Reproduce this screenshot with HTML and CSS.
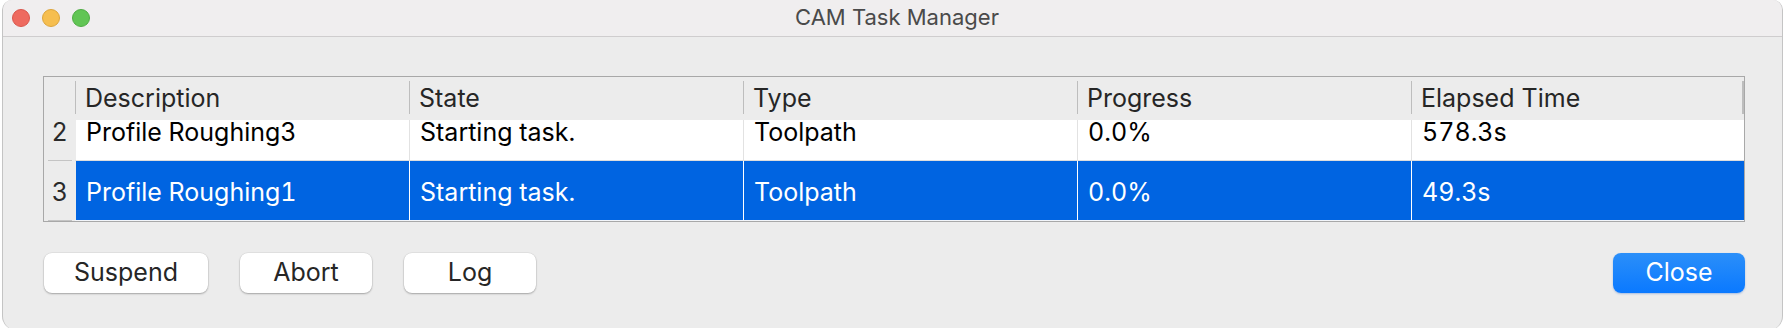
FILE: index.html
```html
<!DOCTYPE html>
<html lang="en">
<head>
    <meta charset="UTF-8">
    <title>CAM Task Manager</title>
    <link rel="stylesheet" href="styles.css">
</head>
<body>
    <div class="window">
        <div class="titlebar">
            <div class="lights">
                <span class="light light-close"></span>
                <span class="light light-min"></span>
                <span class="light light-max"></span>
            </div>
            <div class="title">CAM Task Manager</div>
        </div>

        <div class="content">
            <div class="task-table">
                <div class="table-header">
                    <div class="corner"></div>
                    <div class="head-cell">Description</div>
                    <div class="head-cell">State</div>
                    <div class="head-cell">Type</div>
                    <div class="head-cell">Progress</div>
                    <div class="head-cell head-last">Elapsed Time</div>
                </div>

                <div class="table-body">
                    <div class="task-row scrolled">
                        <div class="row-num">2</div>
                        <div class="cell cell-first">Profile Roughing3</div>
                        <div class="cell">Starting task.</div>
                        <div class="cell">Toolpath</div>
                        <div class="cell">0.0%</div>
                        <div class="cell">578.3s</div>
                    </div>
                    <div class="task-row selected">
                        <div class="row-num">3</div>
                        <div class="cell cell-first">Profile Roughing1</div>
                        <div class="cell">Starting task.</div>
                        <div class="cell">Toolpath</div>
                        <div class="cell">0.0%</div>
                        <div class="cell">49.3s</div>
                    </div>
                </div>
            </div>

            <div class="actions">
                <div class="action-group">
                    <button class="btn btn-suspend">Suspend</button>
                    <button class="btn">Abort</button>
                    <button class="btn">Log</button>
                </div>
                <button class="btn btn-primary">Close</button>
            </div>
        </div>
    </div>
</body>
</html>
```

FILE: styles.css
```css
body {
    margin: 0;
    background: #ffffff;
    font-family: Inter, 'Liberation Sans', sans-serif;
    overflow: hidden;
}

.window {
    margin-left: 2px;
    width: 1779px;
    height: 330px;
    background: #ececec;
    border-left: 1px solid #c4c4c4;
    border-right: 1px solid #c4c4c4;
    border-radius: 10px 10px 14px 14px;
    overflow: hidden;
}

.titlebar {
    height: 36px;
    background: #f0eeef;
    border-bottom: 1px solid #cfcdce;
    display: flex;
    align-items: center;
}

.lights {
    display: flex;
    gap: 12px;
    padding-left: 9px;
    width: 300px;
    flex-shrink: 0;
}

.light {
    flex-shrink: 0;
    width: 18px;
    height: 18px;
    border-radius: 50%;
    box-sizing: border-box;
}

.light-close { background: #ee6a5f; border: 1px solid #d9564c; }
.light-min { background: #f6be4f; border: 1px solid #dca43b; }
.light-max { background: #61c554; border: 1px solid #4fac43; }

.title {
    flex: 1;
    margin-right: 300px;
    text-align: center;
    font-size: 22px;
    color: #4a4a4a;
    padding-bottom: 3px;
}

.content {
    padding: 39px 0 0 40px;
}

.task-table {
    width: 1700px;
    border: 1px solid #a8a8a8;
    background: #f4f4f4;
}

.table-header,
.task-row {
    display: grid;
    grid-template-columns: 31px 334px 334px 334px 334px 333px;
}

.table-header {
    height: 43px;
    background: #ececec;
}

.head-cell {
    font-size: 25px;
    color: #262626;
    line-height: 42px;
    padding-left: 10px;
    background: linear-gradient(#bdbdbd, #bdbdbd) left 4px / 1px 33px no-repeat;
}

.head-last {
    background:
        linear-gradient(#bdbdbd, #bdbdbd) left 4px / 1px 33px no-repeat,
        linear-gradient(#bdbdbd, #bdbdbd) right 4px / 2px 33px no-repeat;
}

.table-body {
    height: 101px;
    overflow: hidden;
}

.task-row {
    height: 59px;
    background: #ffffff;
    border-bottom: 1px solid #dedede;
    color: #000000;
}

.task-row.scrolled {
    margin-top: -19px;
}

.row-num {
    background:
        linear-gradient(#c4c4c4, #c4c4c4) center bottom / 24px 1px no-repeat,
        #ececec;
    color: #2a2a2a;
    font-size: 25px;
    line-height: 56px;
    padding-top: 3px;
    text-align: center;
    margin-bottom: -1px;
    height: 57px;
}

.cell {
    font-size: 25px;
    line-height: 56px;
    padding: 3px 0 0 10px;
    border-left: 1px solid #e2e2e2;
    white-space: nowrap;
    font-variant-numeric: tabular-nums;
}

.cell-first {
    border-left-color: #ececec;
}

.selected {
    background: #0064e1;
    color: #ffffff;
    border-bottom-color: #f2f5fa;
}

.selected .cell {
    border-left-color: #ffffff;
}

.selected .cell-first {
    border-left-color: #ececec;
}

.actions {
    width: 1702px;
    margin-top: 31px;
    display: flex;
    justify-content: space-between;
}

.action-group {
    display: flex;
    gap: 32px;
    padding-left: 1px;
}

.btn {
    height: 40px;
    width: 132px;
    border: none;
    border-radius: 8px;
    background: #ffffff;
    font-family: Inter, 'Liberation Sans', sans-serif;
    font-size: 25px;
    color: #262626;
    padding: 0 0 2px;
    box-shadow: 0 1px 2px rgba(0, 0, 0, 0.28), 0 0 0 0.5px rgba(0, 0, 0, 0.08);
}

.btn-suspend {
    width: 164px;
}

.btn-primary {
    width: 132px;
    color: #ffffff;
    background: linear-gradient(#2b8ff9, #0a79ff);
    box-shadow: 0 1px 2px rgba(0, 80, 200, 0.3);
}
```
